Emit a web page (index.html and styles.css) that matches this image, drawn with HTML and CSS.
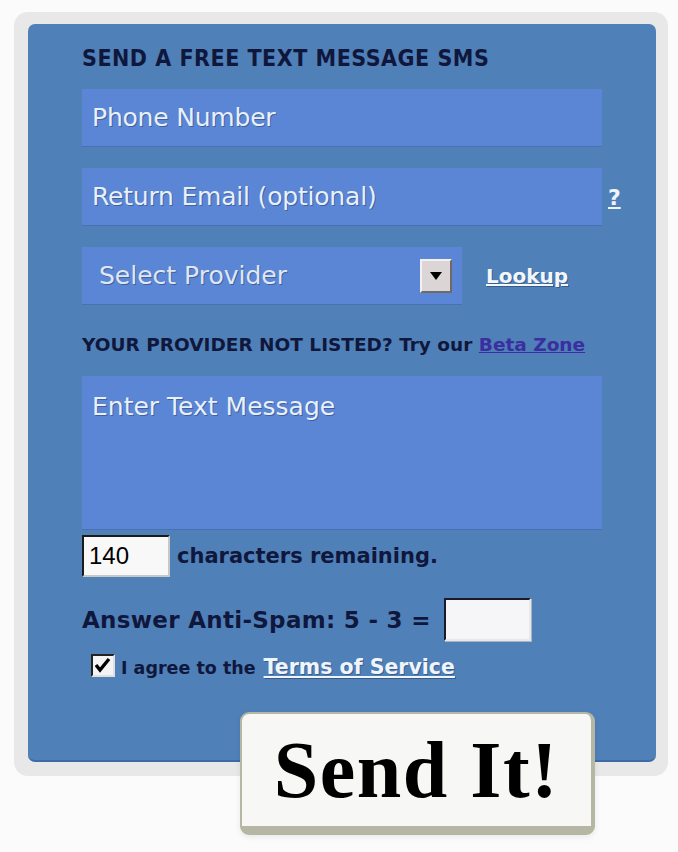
FILE: index.html
```html
<!DOCTYPE html>
<html>
<head>
<meta charset="utf-8">
<link rel="stylesheet" href="styles.css">
</head>
<body>
<div class="page">
  <div class="frame">
    <div class="panel">
      <div class="title">SEND A FREE TEXT MESSAGE SMS</div>
      <div class="row row-phone">
        <div class="field wide">Phone Number</div>
      </div>
      <div class="row row-email">
        <div class="field wide">Return Email (optional)</div>
        <span class="help">?</span>
      </div>
      <div class="row row-select">
        <div class="field select">
          <span class="select-text">Select Provider</span>
          <span class="drop">
            <svg width="12" height="8" viewBox="0 0 12 8"><path d="M0 0 H12 L6 8 Z" fill="#000"/></svg>
          </span>
        </div>
        <span class="lookup">Lookup</span>
      </div>
      <div class="notlisted">YOUR PROVIDER NOT LISTED? Try our <span class="beta">Beta Zone</span></div>
      <div class="field message">Enter Text Message</div>
      <div class="counter">
        <div class="count-box">140</div>
        <span class="count-label">characters remaining.</span>
      </div>
      <div class="spam">
        <span class="spam-label">Answer Anti-Spam: 5 - 3 =</span>
        <div class="spam-box"></div>
      </div>
      <div class="agree">
        <span class="check">
          <svg width="18" height="16" viewBox="0 0 18 16"><path d="M2 8 L6 13 L15 2" stroke="#000" stroke-width="3.4" fill="none" stroke-linejoin="miter"/></svg>
        </span>
        <span class="agree-text">I agree to the</span>
        <span class="tos">Terms of Service</span>
      </div>
    </div>
  </div>
  <div class="send">Send It!</div>
</div>
</body>
</html>
```
FILE: styles.css
```css
html, body {
  margin: 0;
  padding: 0;
  background: #fbfbfb;
}
.page {
  width: 678px;
  height: 852px;
  padding-top: 12px;
  box-sizing: border-box;
}
.frame {
  margin-left: 14px;
  width: 654px;
  height: 764px;
  box-sizing: border-box;
  padding: 12px 12px 0 14px;
  background: #e8e8e8;
  border-radius: 14px;
}
.panel {
  height: 738px;
  box-sizing: border-box;
  background: #5080b8;
  border-radius: 7px;
  padding: 21px 0 0 54px;
  display: flex;
  flex-direction: column;
  align-items: flex-start;
  border-bottom: 2px solid #3f6aa8;
}
.title {
  font-family: "DejaVu Sans Condensed", "DejaVu Sans", sans-serif;
  font-weight: bold;
  font-size: 23px;
  line-height: 26px;
  color: #10173c;
  letter-spacing: 0.5px;
}
.row {
  display: flex;
  align-items: center;
}
.row-phone { margin-top: 18px; }
.row-email { margin-top: 21px; }
.row-select { margin-top: 21px; }
.field {
  background: #5b86d5;
  border-bottom: 1px solid #4a70b4;
  box-sizing: border-box;
  font-family: "DejaVu Sans", sans-serif;
  font-size: 25px;
  color: #e8f0f9;
  text-shadow: 1px 1px 0 rgba(30, 45, 90, 0.45);
  display: flex;
  align-items: center;
}
.wide {
  width: 520px;
  height: 58px;
  padding-left: 10px;
  letter-spacing: -0.2px;
}
.help {
  margin-left: 6px;
  font-family: "DejaVu Sans", sans-serif;
  font-weight: bold;
  font-size: 22px;
  color: #eef4fb;
  text-decoration: underline;
}
.select {
  width: 380px;
  height: 58px;
  padding-left: 17px;
  padding-right: 10px;
  justify-content: space-between;
}
.select-text {
  color: #dfe7f2;
}
.drop {
  width: 32px;
  height: 34px;
  box-sizing: border-box;
  background: #dcd5d5;
  border: 2px solid;
  border-color: #f4f0f0 #6e6a6a #6e6a6a #f4f0f0;
  display: flex;
  align-items: center;
  justify-content: center;
}
.lookup {
  margin-left: 24px;
  font-family: "DejaVu Sans", sans-serif;
  font-weight: bold;
  font-size: 20px;
  color: #f2f7fc;
  text-decoration: underline;
  text-shadow: 1px 1px 0 rgba(20, 30, 70, 0.4);
}
.notlisted {
  margin-top: 28px;
  font-family: "DejaVu Sans", sans-serif;
  font-weight: bold;
  font-size: 18.5px;
  line-height: 24px;
  color: #10173c;
}
.beta {
  color: #3a2ea0;
  text-decoration: underline;
}
.message {
  margin-top: 19px;
  width: 520px;
  height: 154px;
  padding: 16px 0 0 10px;
  align-items: flex-start;
  line-height: 30px;
}
.counter {
  margin-top: 5px;
  display: flex;
  align-items: center;
}
.count-box {
  width: 88px;
  height: 42px;
  box-sizing: border-box;
  background: #f8f8f8;
  border: 2px solid;
  border-color: #1a1a1a #c8c8c8 #c8c8c8 #1a1a1a;
  font-family: "Liberation Sans", sans-serif;
  font-size: 24px;
  color: #000;
  padding-left: 5px;
  display: flex;
  align-items: center;
}
.count-label {
  margin-left: 7px;
  font-family: "DejaVu Sans", sans-serif;
  font-weight: bold;
  font-size: 21px;
  color: #10173c;
}
.spam {
  margin-top: 21px;
  display: flex;
  align-items: center;
}
.spam-label {
  font-family: "DejaVu Sans", sans-serif;
  font-weight: bold;
  font-size: 23px;
  letter-spacing: 0.3px;
  color: #10173c;
}
.spam-box {
  margin-left: 13px;
  width: 87px;
  height: 43px;
  box-sizing: border-box;
  background: #f6f6f8;
  border: 2px solid;
  border-color: #1a1a2a #e8e8e8 #e8e8e8 #1a1a2a;
  box-shadow: 1px 1px 0 #a8b4c8;
}
.agree {
  margin-top: 10px;
  margin-left: 9px;
  display: flex;
  align-items: center;
}
.check {
  width: 24px;
  height: 23px;
  box-sizing: border-box;
  background: #f4f4f4;
  border: 2px solid;
  border-color: #222 #e0e0e0 #e0e0e0 #222;
  display: flex;
  align-items: center;
  justify-content: center;
}
.agree-text {
  margin-left: 6px;
  margin-top: 6px;
  font-family: "DejaVu Sans", sans-serif;
  font-weight: bold;
  font-size: 17.5px;
  color: #10173c;
}
.tos {
  margin-left: 8px;
  margin-top: 4px;
  font-family: "DejaVu Sans", sans-serif;
  font-weight: bold;
  font-size: 20.5px;
  color: #eef5fb;
  text-decoration: underline;
  text-shadow: 1px 1px 0 rgba(20, 30, 70, 0.4);
}
.send {
  position: relative;
  margin-top: -64px;
  margin-left: 240px;
  width: 355px;
  height: 123px;
  box-sizing: border-box;
  background: #f7f7f5;
  border: 2px solid #b6b6a4;
  border-bottom-width: 9px;
  border-right-width: 4px;
  border-radius: 9px;
  font-family: "Liberation Serif", serif;
  font-weight: bold;
  font-size: 80px;
  color: #000;
  display: flex;
  align-items: center;
  justify-content: center;
  letter-spacing: 1.5px;
  box-shadow: 0 2px 6px rgba(0, 0, 0, 0.08);
}
```
